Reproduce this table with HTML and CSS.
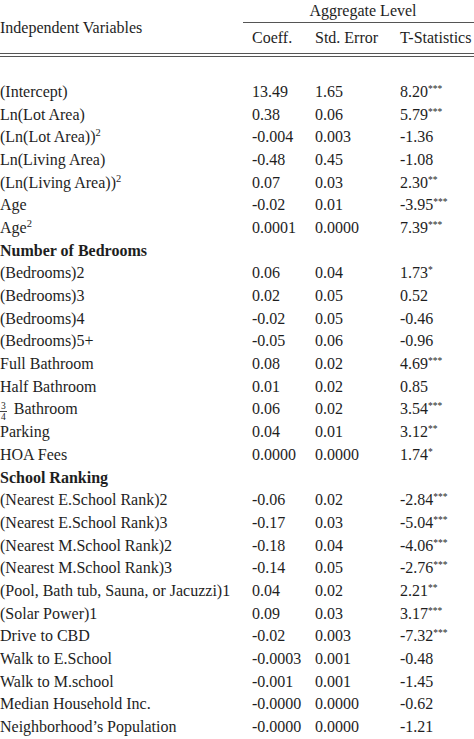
FILE: index.html
```html
<!DOCTYPE html>
<html>
<head>
<meta charset="utf-8">
<link rel="stylesheet" href="styles.css">
</head>
<body>
<div class="table">
  <div class="head">
    <div class="iv">Independent Variables</div>
    <div class="agg">Aggregate Level</div>
    <div class="hc c1">Coeff.</div>
    <div class="hc c2">Std. Error</div>
    <div class="hc c3">T-Statistics</div>
  </div>
  <div class="double"></div>
  <div class="rows">
    <div class="row"><span class="v">(Intercept)</span><span class="n">13.49</span><span class="n">1.65</span><span class="n">8.20<sup class="st">***</sup></span></div>
    <div class="row"><span class="v">Ln(Lot Area)</span><span class="n">0.38</span><span class="n">0.06</span><span class="n">5.79<sup class="st">***</sup></span></div>
    <div class="row"><span class="v">(Ln(Lot Area))<sup class="pw">2</sup></span><span class="n">-0.004</span><span class="n">0.003</span><span class="n">-1.36</span></div>
    <div class="row"><span class="v">Ln(Living Area)</span><span class="n">-0.48</span><span class="n">0.45</span><span class="n">-1.08</span></div>
    <div class="row"><span class="v">(Ln(Living Area))<sup class="pw">2</sup></span><span class="n">0.07</span><span class="n">0.03</span><span class="n">2.30<sup class="st">**</sup></span></div>
    <div class="row"><span class="v">Age</span><span class="n">-0.02</span><span class="n">0.01</span><span class="n">-3.95<sup class="st">***</sup></span></div>
    <div class="row"><span class="v">Age<sup class="pw">2</sup></span><span class="n">0.0001</span><span class="n">0.0000</span><span class="n">7.39<sup class="st">***</sup></span></div>
    <div class="row"><span class="v grp">Number of Bedrooms</span></div>
    <div class="row"><span class="v">(Bedrooms)2</span><span class="n">0.06</span><span class="n">0.04</span><span class="n">1.73<sup class="st">*</sup></span></div>
    <div class="row"><span class="v">(Bedrooms)3</span><span class="n">0.02</span><span class="n">0.05</span><span class="n">0.52</span></div>
    <div class="row"><span class="v">(Bedrooms)4</span><span class="n">-0.02</span><span class="n">0.05</span><span class="n">-0.46</span></div>
    <div class="row"><span class="v">(Bedrooms)5+</span><span class="n">-0.05</span><span class="n">0.06</span><span class="n">-0.96</span></div>
    <div class="row"><span class="v">Full Bathroom</span><span class="n">0.08</span><span class="n">0.02</span><span class="n">4.69<sup class="st">***</sup></span></div>
    <div class="row"><span class="v">Half Bathroom</span><span class="n">0.01</span><span class="n">0.02</span><span class="n">0.85</span></div>
    <div class="row"><span class="v"><span class="frac"><span class="fn">3</span><span class="fd">4</span></span> Bathroom</span><span class="n">0.06</span><span class="n">0.02</span><span class="n">3.54<sup class="st">***</sup></span></div>
    <div class="row"><span class="v">Parking</span><span class="n">0.04</span><span class="n">0.01</span><span class="n">3.12<sup class="st">**</sup></span></div>
    <div class="row"><span class="v">HOA Fees</span><span class="n">0.0000</span><span class="n">0.0000</span><span class="n">1.74<sup class="st">*</sup></span></div>
    <div class="row"><span class="v grp">School Ranking</span></div>
    <div class="row"><span class="v">(Nearest E.School Rank)2</span><span class="n">-0.06</span><span class="n">0.02</span><span class="n">-2.84<sup class="st">***</sup></span></div>
    <div class="row"><span class="v">(Nearest E.School Rank)3</span><span class="n">-0.17</span><span class="n">0.03</span><span class="n">-5.04<sup class="st">***</sup></span></div>
    <div class="row"><span class="v">(Nearest M.School Rank)2</span><span class="n">-0.18</span><span class="n">0.04</span><span class="n">-4.06<sup class="st">***</sup></span></div>
    <div class="row"><span class="v">(Nearest M.School Rank)3</span><span class="n">-0.14</span><span class="n">0.05</span><span class="n">-2.76<sup class="st">***</sup></span></div>
    <div class="row"><span class="v">(Pool, Bath tub, Sauna, or Jacuzzi)1</span><span class="n">0.04</span><span class="n">0.02</span><span class="n">2.21<sup class="st">**</sup></span></div>
    <div class="row"><span class="v">(Solar Power)1</span><span class="n">0.09</span><span class="n">0.03</span><span class="n">3.17<sup class="st">***</sup></span></div>
    <div class="row"><span class="v">Drive to CBD</span><span class="n">-0.02</span><span class="n">0.003</span><span class="n">-7.32<sup class="st">***</sup></span></div>
    <div class="row"><span class="v">Walk to E.School</span><span class="n">-0.0003</span><span class="n">0.001</span><span class="n">-0.48</span></div>
    <div class="row"><span class="v">Walk to M.school</span><span class="n">-0.001</span><span class="n">0.001</span><span class="n">-1.45</span></div>
    <div class="row"><span class="v">Median Household Inc.</span><span class="n">-0.0000</span><span class="n">0.0000</span><span class="n">-0.62</span></div>
    <div class="row"><span class="v">Neighborhood’s Population</span><span class="n">-0.0000</span><span class="n">0.0000</span><span class="n">-1.21</span></div>
  </div>
</div>
</body>
</html>
```
FILE: styles.css
```css
html, body {
  margin: 0;
  padding: 0;
  background: #ffffff;
}
body {
  font-family: "Liberation Serif", "DejaVu Serif", serif;
  font-size: 16px;
  color: #1e1e1e;
  width: 474px;
  overflow: hidden;
}
.table {
  width: 474px;
}
.head {
  display: grid;
  grid-template-columns: 243px 63px 85px 1fr;
  grid-template-rows: 23px 30px;
}
.iv {
  grid-column: 1;
  grid-row: 1 / span 2;
  align-self: center;
  padding-top: 2px;
  white-space: nowrap;
}
.agg {
  grid-column: 2 / span 3;
  grid-row: 1;
  border-bottom: 1px solid #555;
  text-align: center;
  padding-left: 9px;
  line-height: 22px;
}
.hc {
  grid-row: 2;
  padding-left: 9px;
  align-self: center;
  white-space: nowrap;
}
.double {
  height: 2px;
  border-top: 1px solid #555;
  border-bottom: 1px solid #555;
}
.rows {
  padding-top: 23.5px;
}
.row {
  display: grid;
  grid-template-columns: 243px 63px 85px 1fr;
  height: 22.7px;
  align-items: center;
  white-space: nowrap;
}
.v, .n {
  line-height: 20px;
  height: 20px;
}
.n {
  padding-left: 9px;
}
.grp {
  font-weight: bold;
}
sup {
  line-height: 0;
}
.pw {
  font-size: 10.5px;
  vertical-align: 6px;
}
.st {
  font-size: 9.5px;
  vertical-align: 5px;
}
.frac {
  display: inline-flex;
  flex-direction: column;
  align-items: center;
  font-size: 9.5px;
  line-height: 8px;
  vertical-align: 5px;
  margin-right: 3px;
}
.fn {
  border-bottom: 1px solid #444;
  padding: 0 1px 1px;
}
.fd {
  padding-top: 1px;
}
```
